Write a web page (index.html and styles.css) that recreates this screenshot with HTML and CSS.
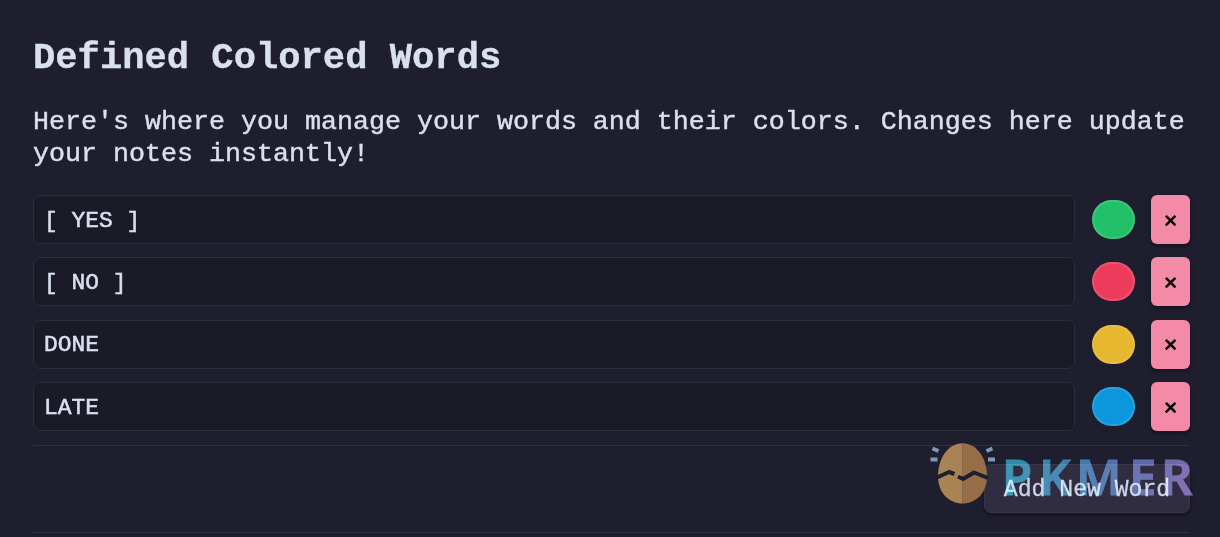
FILE: index.html
```html
<!DOCTYPE html>
<html lang="en">
<head>
    <meta charset="UTF-8">
    <meta name="viewport" content="width=device-width, initial-scale=1.0">
    <title>Colored Words</title>
    <link rel="stylesheet" href="styles.css">
</head>
<body>
    <div class="settings">
        <h1>Defined Colored Words</h1>
        <p class="description">Here's where you manage your words and their colors. Changes here update your notes instantly!</p>

        <div class="word-list">
            <div class="word-row">
                <input class="word-input" type="text" value="[ YES ]">
                <span class="swatch green"></span>
                <button class="remove">×</button>
            </div>
            <div class="word-row">
                <input class="word-input" type="text" value="[ NO ]">
                <span class="swatch red"></span>
                <button class="remove">×</button>
            </div>
            <div class="word-row">
                <input class="word-input" type="text" value="DONE">
                <span class="swatch yellow"></span>
                <button class="remove">×</button>
            </div>
            <div class="word-row">
                <input class="word-input" type="text" value="LATE">
                <span class="swatch blue"></span>
                <button class="remove">×</button>
            </div>
        </div>

        <div class="actions">
            <button class="add">Add New Word</button>
        </div>
    </div>

    <svg class="watermark" width="272" height="70" viewBox="0 0 272 70">
        <!-- cracked egg -->
        <path fill="#a98354" d="M34.600 3.300C19 3.300 10 20 10 36C10 53 21 63.500 34.600 63.500Z"/>
        <path fill="#976e48" d="M34.400 3.300C50 3.300 59 20 59 36C59 53 48 63.500 34.400 63.500Z"/>
        <path fill="none" stroke="#1e1e2e" stroke-width="4" stroke-linejoin="round" d="M9 37.500L21 32L26.500 34M30 36.500L35 39L46 32.500L60 38"/>
        <path stroke="#8199b5" stroke-width="3.800" d="M4.500 8.500L10.500 11M2.500 19.500H9.500M58.500 11L64.500 8.500M60 19.500H67"/>
    </svg>
    <svg class="watermark blend" width="272" height="70" viewBox="0 0 272 70">
        <defs>
            <linearGradient id="brand" gradientUnits="userSpaceOnUse" x1="78" y1="0" x2="266" y2="0">
                <stop offset="0" stop-color="#10809c"/>
                <stop offset="0.5" stop-color="#30649a"/>
                <stop offset="0.75" stop-color="#4d5498"/>
                <stop offset="1" stop-color="#6a549c"/>
            </linearGradient>
        </defs>
        <text class="brand-text" x="73 110 147 200 232" y="54.500" fill="url(#brand)" stroke="url(#brand)" stroke-width="1">PKMER</text>
    </svg>
</body>
</html>
```
FILE: styles.css
```css
* {
    box-sizing: border-box;
}
body {
    position: relative;
    margin: 0;
    height: 537px;
    overflow: hidden;
    background: #1e1e2e;
    color: #d9e0ee;
    font-family: "Liberation Mono", monospace;
}
.settings {
    padding: 36px 30px 0 33px;
}
h1 {
    margin: 0;
    font-size: 37.200px;
    line-height: 44px;
    letter-spacing: -0.020px;
    -webkit-text-stroke: 0.300px #d9e0ee;
}
.description {
    margin: 26px 0 0;
    font-size: 26.670px;
    line-height: 32px;
    -webkit-text-stroke: 0.400px #d9e0ee;
}
.word-list {
    display: flex;
    flex-direction: column;
    gap: 13.400px;
    margin-top: 25px;
    padding-bottom: 14px;
    border-bottom: 1px solid #302f40;
}
.word-row {
    display: flex;
    align-items: center;
    height: 49px;
}
.word-input {
    flex: 1;
    height: 49px;
    min-width: 0;
    margin-right: 17px;
    padding: 2px 10px 0;
    background: #1b1b27;
    border: 1px solid #2d2c3c;
    border-radius: 7px;
    color: #d9e0ee;
    font: 22.900px "Liberation Mono", monospace;
    -webkit-text-stroke: 0.500px #d9e0ee;
}
.swatch {
    width: 43px;
    height: 39px;
    margin-right: 16px;
    border: 2px solid rgba(255, 255, 255, 0.120);
    border-radius: 20px;
}
.green {
    background: #22c069;
}
.red {
    background: #ec3b5b;
}
.yellow {
    background: #e6b72f;
}
.blue {
    background: #0b96de;
}
.remove {
    width: 39px;
    height: 49px;
    padding: 4px 0 0;
    background: #f38ba8;
    border: none;
    border-radius: 6px;
    box-shadow: 0 2px 4px rgba(0, 0, 0, 0.400);
    color: #000;
    font: bold 22.900px "Liberation Mono", monospace;
}
.actions {
    display: flex;
    justify-content: flex-end;
    padding: 18px 0 19px;
    border-bottom: 1px solid #302f40;
}
.add {
    width: 206px;
    height: 49px;
    padding: 2px 0 0;
    background: #302d41;
    border: 1px solid #393649;
    border-radius: 7px;
    box-shadow: 0 2px 4px rgba(0, 0, 0, 0.400);
    color: #ccd5ea;
    font: 23.100px "Liberation Mono", monospace;
    -webkit-text-stroke: 0.300px #ccd5ea;
}
/* brand mark floats over the bottom right corner */
.watermark {
    position: absolute;
    left: 928px;
    top: 440px;
    pointer-events: none;
}
.blend {
    left: 929px;
    mix-blend-mode: screen;
}
.brand-text {
    font: 600 49px "Noto Sans", sans-serif;
}
```
